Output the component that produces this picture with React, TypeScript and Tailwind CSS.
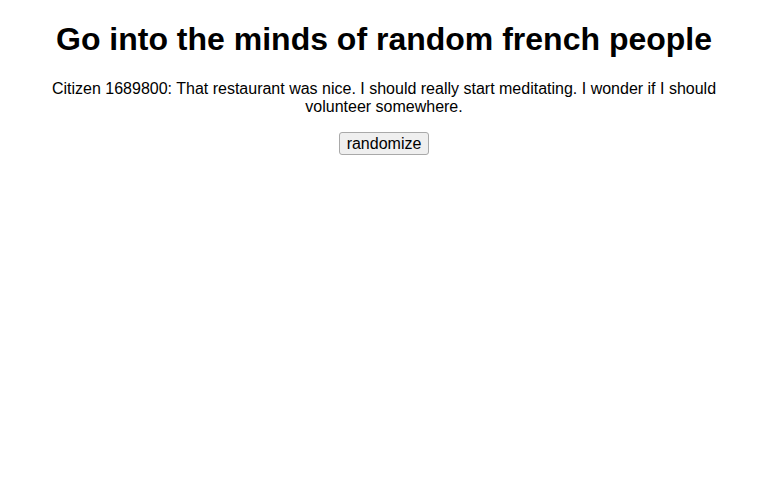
import React from 'react';

const App: React.FC = () => {
  return (
    <div className="min-h-[480px] bg-white text-black text-center font-['Liberation_Sans',Arial,sans-serif]">
      <div className="px-2 pt-[21px]">
        <h1 className="text-[32px] leading-[37px] font-bold">Go into the minds of random french people</h1>
        <p className="mx-auto mt-[22px] max-w-[720px] text-base leading-[18px]">
          Citizen 1689800: That restaurant was nice. I should really start meditating. I wonder if I should volunteer
          somewhere.
        </p>
        <button className="mt-[16px] rounded-[3px] border border-[#a9a9a9] bg-[#efefef] px-[7px] py-[2px] text-base leading-[17px] text-black">
          randomize
        </button>
      </div>
    </div>
  );
};

export default App;
